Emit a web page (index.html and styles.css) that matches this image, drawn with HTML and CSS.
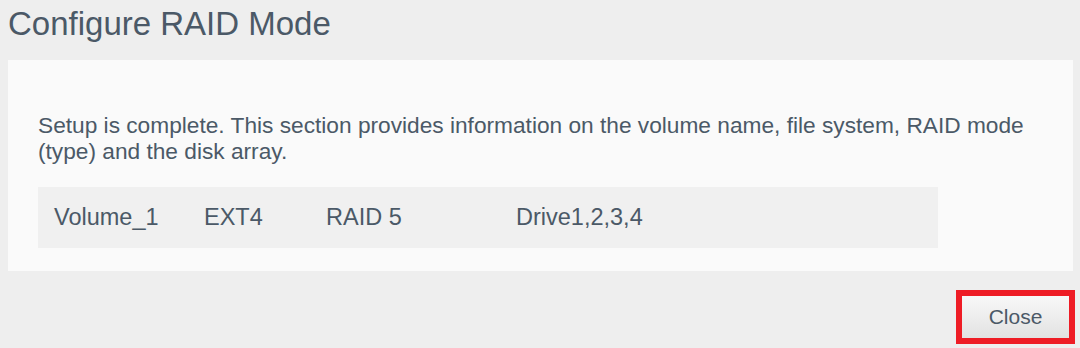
FILE: index.html
```html
<!DOCTYPE html>
<html lang="en">
<head>
	<meta charset="UTF-8">
	<title>Configure RAID Mode</title>
	<link rel="stylesheet" href="styles.css">
</head>
<body>
	<section class="dialog">
		<h2 class="title">Configure RAID Mode</h2>
		<section class="panel">
			<p class="desc">Setup is complete. This section provides information on the volume name, file system, RAID mode (type) and the disk array.</p>
			<ul class="volList">
				<li>
					<span class="colName">Volume_1</span>
					<span class="colFs">EXT4</span>
					<span class="colRaid">RAID 5</span>
					<span class="colDisk">Drive1,2,3,4</span>
				</li>
			</ul>
		</section>
		<footer class="footer">
			<input type="button" value="Close" class="btnClose">
		</footer>
	</section>
</body>
</html>
```

FILE: styles.css
```css
body{
	margin:0;
	background:#eeeeee;
	font-family:"Liberation Sans", Arial, sans-serif;
	color:#4b5967;
}
h2,p{
	margin:0;
}
ul,li{
	margin:0;
	padding:0;
	list-style:none;
}
input{
	border:0;
	outline:none;
	font-family:inherit;
}
.dialog{
	width:1080px;
	height:348px;
	padding:0 7px 0 8px;
	box-sizing:border-box;
}
.title{
	font-weight:normal;
	font-size:33px;
	line-height:46px;
	padding-top:1px;
	height:60px;
	box-sizing:border-box;
}
.panel{
	background:#fafafa;
	padding:52px 28px 23px 30px;
	height:211px;
	box-sizing:border-box;
}
.desc{
	font-size:22.7px;
	line-height:26px;
}
.volList{
	width:900px;
	margin-top:23px;
	background:#f0f0f0;
}
.volList li{
	display:flex;
	height:61px;
	align-items:center;
	padding-left:16px;
	font-size:23.5px;
}
.colName{
	width:150px;
}
.colFs{
	width:122px;
}
.colRaid{
	width:190px;
}
.footer{
	display:flex;
	justify-content:flex-end;
	padding-top:19px;
}
.btnClose{
	width:119px;
	height:54px;
	border:6px solid #ee1c25;
	background:linear-gradient(#f8f8f8,#e2e2e2);
	color:#4b5967;
	font-size:21px;
	cursor:pointer;
	box-sizing:border-box;
	margin-right:-2px;
}
```
